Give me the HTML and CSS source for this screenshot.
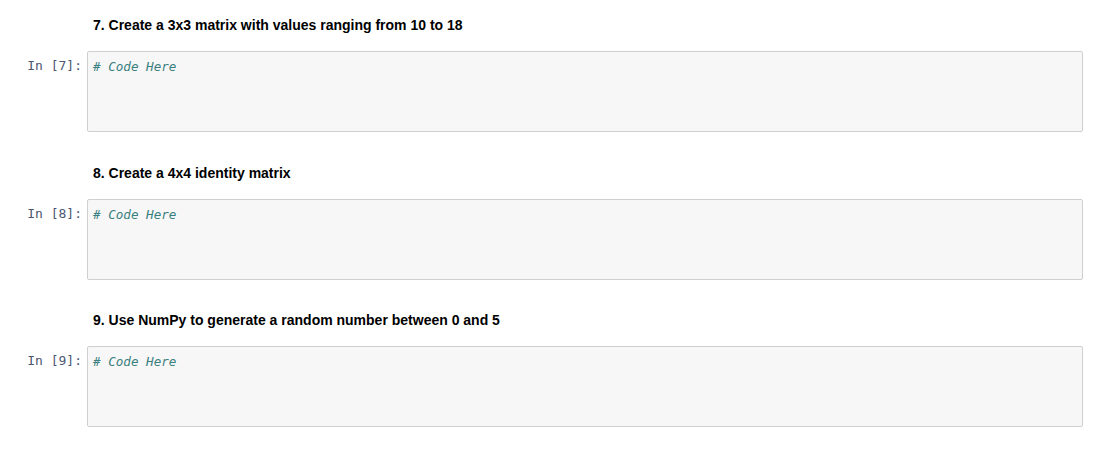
FILE: index.html
```html
<!DOCTYPE html>
<html>
<head>
<meta charset="utf-8">
<link rel="stylesheet" href="styles.css">
</head>
<body>
<div class="page">
  <section class="cell">
    <div class="md">7. Create a 3x3 matrix with values ranging from 10 to 18</div>
    <div class="code-row">
      <div class="prompt">In [7]:</div>
      <div class="input"><span class="comment"># Code Here</span></div>
    </div>
  </section>
  <section class="cell">
    <div class="md">8. Create a 4x4 identity matrix</div>
    <div class="code-row">
      <div class="prompt">In [8]:</div>
      <div class="input"><span class="comment"># Code Here</span></div>
    </div>
  </section>
  <section class="cell">
    <div class="md">9. Use NumPy to generate a random number between 0 and 5</div>
    <div class="code-row">
      <div class="prompt">In [9]:</div>
      <div class="input"><span class="comment"># Code Here</span></div>
    </div>
  </section>
</div>
</body>
</html>
```
FILE: styles.css
```css
html, body {
  margin: 0;
  padding: 0;
  background: #ffffff;
}
.page {
  padding-top: 15px;
  padding-right: 19px;
}
.cell {
  margin-bottom: 30.5px;
}
.md {
  padding-left: 93px;
  height: 20px;
  line-height: 20px;
  font-family: "Liberation Sans", Arial, sans-serif;
  font-weight: bold;
  font-size: 14px;
  color: #000000;
  margin-bottom: 16px;
}
.code-row {
  display: grid;
  grid-template-columns: 87px 1fr;
}
.prompt {
  font-family: "DejaVu Sans Mono", monospace;
  font-size: 13px;
  line-height: 17px;
  color: #4b5670;
  text-align: right;
  padding-right: 5px;
  padding-top: 6px;
}
.input {
  box-sizing: border-box;
  height: 81px;
  background: #f7f7f7;
  border: 1px solid #cfcfcf;
  border-radius: 2px;
  padding: 6px 5px;
  font-family: "DejaVu Sans Mono", monospace;
  font-size: 12.6px;
  line-height: 17px;
}
.comment {
  color: #3a7f80;
  font-style: italic;
}
```
